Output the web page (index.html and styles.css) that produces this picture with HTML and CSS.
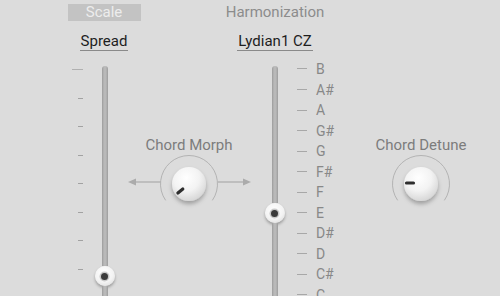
FILE: index.html
```html
<!DOCTYPE html>
<html lang="en">
<head>
    <meta charset="UTF-8">
    <meta name="viewport" content="width=device-width, initial-scale=1.0">
    <title>Harmonization</title>
    <link rel="stylesheet" href="styles.css">
</head>
<body>
    <div class="panel">
        <section class="col col-spread">
            <div class="tab">Scale</div>
            <div class="title">Spread</div>
            <div class="slider slider-spread">
                <div class="ticks">
                    <span class="tick tick-long"></span>
                    <span class="tick"></span>
                    <span class="tick"></span>
                    <span class="tick"></span>
                    <span class="tick"></span>
                    <span class="tick"></span>
                    <span class="tick"></span>
                    <span class="tick"></span>
                </div>
                <div class="track-wrap">
                    <div class="track track-top"></div>
                    <div class="thumb"><span class="dot"></span></div>
                    <div class="track track-bottom"></div>
                </div>
            </div>
        </section>

        <section class="col col-morph">
            <div class="label">Chord Morph</div>
            <div class="knob-row">
                <svg class="arrow" width="33" height="8" viewBox="0 0 33 8">
                    <polygon points="0,4 8,0.5 8,7.5" fill="#ababab"/>
                    <line x1="7" y1="4" x2="33" y2="4" stroke="#ababab" stroke-width="1.2"/>
                </svg>
                <svg class="knob" width="64" height="64" viewBox="0 0 64 64">
                    <defs>
                        <radialGradient id="morph-fill" cx="42%" cy="32%" r="70%">
                            <stop offset="0" stop-color="#ffffff"/>
                            <stop offset="0.55" stop-color="#f3f3f3"/>
                            <stop offset="1" stop-color="#d6d6d6"/>
                        </radialGradient>
                        <filter id="morph-shadow" x="-50%" y="-50%" width="200%" height="200%">
                            <feDropShadow dx="0" dy="3" stdDeviation="2.2" flood-color="#000" flood-opacity="0.28"/>
                        </filter>
                    </defs>
                    <path d="M8.65 48.35 A28.5 28.5 0 1 1 55.35 48.35" fill="none" stroke="#b3b3b3" stroke-width="1"/>
                    <circle cx="32" cy="32" r="17" fill="url(#morph-fill)" filter="url(#morph-shadow)"/>
                    <line x1="25.8" y1="37" x2="20.9" y2="41" stroke="#2e2e2e" stroke-width="3.2" stroke-linecap="round"/>
                </svg>
                <svg class="arrow" width="33" height="8" viewBox="0 0 33 8">
                    <line x1="0" y1="4" x2="26" y2="4" stroke="#ababab" stroke-width="1.2"/>
                    <polygon points="33,4 25,0.5 25,7.5" fill="#ababab"/>
                </svg>
            </div>
        </section>

        <section class="col col-harm">
            <div class="heading">Harmonization</div>
            <div class="title">Lydian1 CZ</div>
            <div class="slider slider-notes">
                <div class="track-wrap">
                    <div class="track track-top"></div>
                    <div class="thumb"><span class="dot"></span></div>
                    <div class="track track-bottom"></div>
                </div>
                <ul class="notes">
                    <li><span class="tick"></span>B</li>
                    <li><span class="tick"></span>A#</li>
                    <li><span class="tick"></span>A</li>
                    <li><span class="tick"></span>G#</li>
                    <li><span class="tick"></span>G</li>
                    <li><span class="tick"></span>F#</li>
                    <li><span class="tick"></span>F</li>
                    <li><span class="tick"></span>E</li>
                    <li><span class="tick"></span>D#</li>
                    <li><span class="tick"></span>D</li>
                    <li><span class="tick"></span>C#</li>
                    <li><span class="tick"></span>C</li>
                </ul>
            </div>
        </section>

        <section class="col col-detune">
            <div class="label">Chord Detune</div>
            <svg class="knob" width="64" height="64" viewBox="0 0 64 64">
                <defs>
                    <radialGradient id="detune-fill" cx="42%" cy="32%" r="70%">
                        <stop offset="0" stop-color="#ffffff"/>
                        <stop offset="0.55" stop-color="#f3f3f3"/>
                        <stop offset="1" stop-color="#d6d6d6"/>
                    </radialGradient>
                    <filter id="detune-shadow" x="-50%" y="-50%" width="200%" height="200%">
                        <feDropShadow dx="0" dy="3" stdDeviation="2.2" flood-color="#000" flood-opacity="0.28"/>
                    </filter>
                </defs>
                <path d="M8.65 48.35 A28.5 28.5 0 1 1 55.35 48.35" fill="none" stroke="#b3b3b3" stroke-width="1"/>
                <circle cx="32" cy="32" r="17" fill="url(#detune-fill)" filter="url(#detune-shadow)"/>
                <line x1="24.5" y1="31" x2="17.5" y2="31" stroke="#2e2e2e" stroke-width="3.2" stroke-linecap="round"/>
            </svg>
        </section>
    </div>
</body>
</html>
```

FILE: styles.css
```css
* {
    padding: 0;
    margin: 0;
    box-sizing: border-box;
}
body {
    background: #dcdcdc;
    font-family: Roboto, "Liberation Sans", sans-serif;
}
.panel {
    width: 500px;
    height: 296px;
    overflow: hidden;
    display: flex;
}
.col {
    display: flex;
    flex-direction: column;
    align-items: center;
}
.col-spread {
    margin-left: 64px;
    width: 80px;
}
.col-morph {
    width: 90px;
    padding-top: 136px;
}
.col-harm {
    width: 82px;
}
.col-detune {
    margin-left: 55px;
    width: 100px;
    padding-top: 136px;
}

/* headers */
.tab {
    margin-top: 4px;
    width: 73px;
    height: 17px;
    line-height: 17px;
    text-align: center;
    background: #c3c3c3;
    color: #ededed;
    font-size: 15px;
}
.heading {
    margin-top: 4px;
    line-height: 17px;
    color: #8c8c8c;
    font-size: 15px;
    white-space: nowrap;
}
.title {
    margin-top: 12px;
    line-height: 17px;
    font-size: 15px;
    color: #1e1e1e;
    padding: 0 1px;
    border-bottom: 1px solid #8a8a8a;
    white-space: nowrap;
}

/* sliders */
.slider {
    margin-top: 15px;
    align-self: flex-start;
    display: flex;
    align-items: flex-start;
}
.slider-spread {
    margin-left: 7.5px;
    gap: 12px;
}
.slider-notes {
    margin-left: 30.5px;
}
.ticks {
    display: flex;
    flex-direction: column;
    align-items: flex-end;
    padding-top: 3px;
    width: 11px;
}
.ticks .tick {
    display: block;
    width: 5px;
    height: 28.5px;
    border-top: 1px solid #a2a2a2;
}
.ticks .tick-long {
    width: 11px;
    border-top-color: #b0b0b0;
}
.track-wrap {
    width: 20px;
    display: flex;
    flex-direction: column;
    align-items: center;
}
.track {
    width: 6px;
    background: linear-gradient(90deg, #9c9c9c, #b9b9b9 35%, #b9b9b9 65%, #9c9c9c);
}
.track-top {
    border-radius: 3px 3px 0 0;
}
.slider-spread .track-top {
    height: 200px;
}
.slider-notes .track-top {
    height: 137px;
}
.track-bottom {
    height: 120px;
}
.thumb {
    width: 20px;
    height: 20px;
    border-radius: 50%;
    background: radial-gradient(circle at 45% 35%, #ffffff, #f3f3f3 55%, #d4d4d4);
    box-shadow: 0 2px 3px rgba(0, 0, 0, 0.3);
    display: grid;
    place-items: center;
}
.dot {
    width: 7px;
    height: 7px;
    border-radius: 50%;
    background: #3a3a3a;
    box-shadow: 0 0 0 1.5px #c9c9c9;
}
.notes {
    list-style: none;
    margin-left: 12.5px;
    margin-top: -7.3px;
}
.notes li {
    height: 20.55px;
    display: flex;
    align-items: center;
    font-size: 14px;
    color: #888888;
}
.notes .tick {
    width: 10px;
    border-top: 1px solid #a8a8a8;
    margin-right: 9px;
}

/* knobs */
.label {
    line-height: 18px;
    font-size: 15px;
    color: #7c7c7c;
    white-space: nowrap;
}
.knob-row {
    margin-top: -2.5px;
    display: flex;
    align-items: flex-start;
}
.arrow {
    margin-top: 26.5px;
}
.knob-row .arrow:first-child {
    margin-right: -4px;
}
.knob-row .arrow:last-child {
    margin-left: -3px;
}
.col-detune .knob {
    margin-top: -2px;
}
```
